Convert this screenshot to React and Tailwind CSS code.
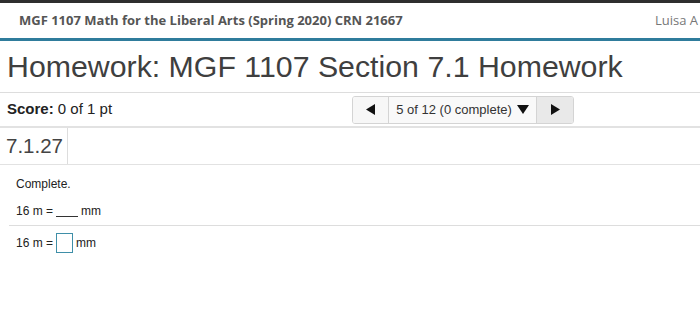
export default function App() {
  return (
    <div className="w-[700px] h-[323px] bg-white overflow-hidden" style={{ fontFamily: "'Liberation Sans', Arial, sans-serif" }}>
      {/* top strip */}
      <div className="h-[3px] bg-[#2e2e2e]" />

      {/* course header */}
      <div className="h-[38px] flex items-center justify-between pl-[19px] pr-[2px] border-b-[3px] border-[#2f7c9c]">
        <span className="text-[13px] font-bold text-[#555]" style={{ fontFamily: "'Open Sans', sans-serif" }}>
          MGF 1107 Math for the Liberal Arts (Spring 2020) CRN 21667
        </span>
        <span className="text-[13px] text-[#777]" style={{ fontFamily: "'Open Sans', sans-serif" }}>
          Luisa A
        </span>
      </div>

      {/* title */}
      <div className="h-[52px] flex items-center pl-[7px] border-b border-[#ddd]">
        <h1 className="text-[30.3px] text-[#3f3f3f] leading-none pt-[2px]">Homework: MGF 1107 Section 7.1 Homework</h1>
      </div>

      {/* score + nav */}
      <div className="h-[35px] flex items-center border-b-2 border-[#e2e2e2] pl-[7px]">
        <div className="w-[345px] text-[15px] text-[#222]">
          <span className="font-bold">Score:</span> 0 of 1 pt
        </div>
        <div className="flex h-[28px] border border-[#d4d4d4] rounded-[3px] text-[13px] text-[#333] overflow-hidden">
          <div className="w-[36px] flex items-center justify-center bg-[#f7f7f7] border-r border-[#d4d4d4]">
            <svg width="9" height="11" viewBox="0 0 9 11"><path d="M9 0 L0 5.5 L9 11 Z" fill="#111" /></svg>
          </div>
          <div className="w-[148px] flex items-center justify-center gap-[5px] bg-[#f9f9f9] border-r border-[#d4d4d4]">
            <span>5 of 12 (0 complete)</span>
            <svg width="12" height="9" viewBox="0 0 12 9"><path d="M0 0 L12 0 L6 9 Z" fill="#111" /></svg>
          </div>
          <div className="w-[36px] flex items-center justify-center bg-[#e9e9e9]">
            <svg width="9" height="11" viewBox="0 0 9 11"><path d="M0 0 L9 5.5 L0 11 Z" fill="#111" /></svg>
          </div>
        </div>
      </div>

      {/* question number */}
      <div className="h-[37px] flex border-b border-[#e2e2e2]">
        <div className="w-[68px] flex items-center pl-[6px] border-r border-[#ddd] text-[20.5px] text-[#444]">7.1.27</div>
      </div>

      {/* question body */}
      <div className="pl-[16px] pt-[12px] text-[12px] text-[#222]">
        <div className="h-[14px] leading-[14px]">Complete.</div>
        <div className="mt-[13px] h-[14px] leading-[14px] flex items-center">
          16 m = <span className="inline-block w-[22px] border-b border-[#333] h-[12px] mx-[3px]" /> mm
        </div>
      </div>
      <div className="ml-[9px] mt-[7px] border-t border-[#ddd]" />
      <div className="pl-[16px] pt-[7px] text-[12px] text-[#222] flex items-center">
        16 m =
        <span className="inline-block w-[17px] h-[20px] border border-[#3f8fa8] mx-[3px]" />
        mm
      </div>
    </div>
  );
}
